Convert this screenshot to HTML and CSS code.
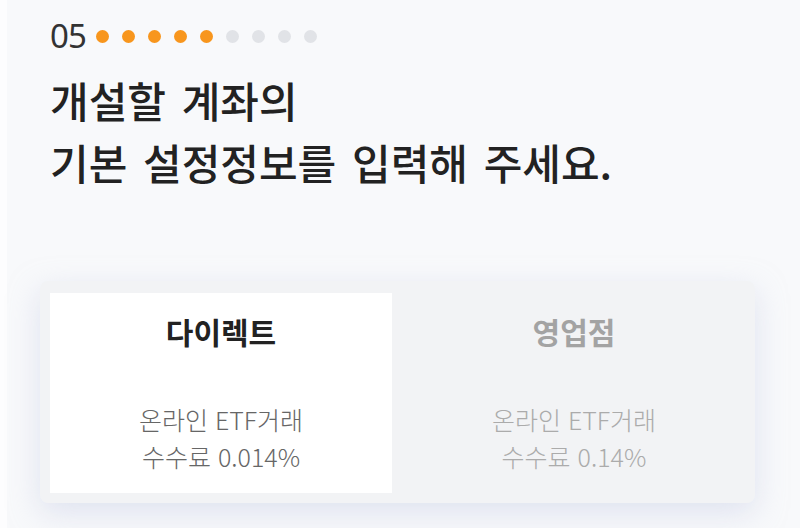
FILE: index.html
```html
<!DOCTYPE html>
<html lang="ko">
<head>
  <meta charset="UTF-8" />
  <meta name="viewport" content="width=device-width, initial-scale=1.0"/>
  <title>계좌개설 – 기본 설정정보</title>
  <link rel="stylesheet" href="styles.css">
</head>
<body>

  <div class="page">
    <div class="step">
      <span class="step-num">05</span>
      <div class="dots">
        <span class="dot on"></span>
        <span class="dot on"></span>
        <span class="dot on"></span>
        <span class="dot on"></span>
        <span class="dot on"></span>
        <span class="dot"></span>
        <span class="dot"></span>
        <span class="dot"></span>
        <span class="dot"></span>
      </div>
    </div>

    <h1 class="title">개설할 계좌의<br>기본 설정정보를 입력해 주세요.</h1>

    <!-- 계좌 유형 선택 -->
    <div class="type-card">
      <div class="type-tab active">
        <div class="tab-name">다이렉트</div>
        <div class="tab-desc">온라인 ETF거래<br>수수료 0.014%</div>
      </div>
      <div class="type-tab">
        <div class="tab-name">영업점</div>
        <div class="tab-desc">온라인 ETF거래<br>수수료 0.14%</div>
      </div>
    </div>
  </div>

</body>
</html>
```

FILE: styles.css
```css
* { box-sizing: border-box; margin: 0; padding: 0; }
body {
  font-family: 'Noto Sans CJK KR', 'Noto Sans', sans-serif;
  background: #fdfdfe; color: #222;
}
.page {
  margin-left: 7px; min-height: 528px;
  padding: 18px 0 0 33px;
  background: #f8f9fb;
}
.step {
  display: flex; align-items: center; gap: 10px;
  padding-left: 10px; height: 36px;
}
.step-num {
  font-family: 'Noto Sans', sans-serif;
  font-size: 33px; line-height: 36px; font-weight: 400; color: #333;
  letter-spacing: -1px;
}
.dots { display: flex; gap: 13px; }
.dot {
  width: 13px; height: 13px; border-radius: 50%;
  background: #e1e3e7;
}
.dot.on { background: #f8961d; }

.title {
  margin-top: 15px; padding-left: 10px;
  font-size: 42px; line-height: 62px; font-weight: 500; color: #222;
  word-spacing: 4px;
}

.type-card {
  margin-top: 88px; width: 715px;
  display: grid; grid-template-columns: 1fr 1fr; gap: 11px;
  padding: 12px 10px 10px;
  background: #f2f3f5; border-radius: 8px;
  box-shadow: 0 10px 30px rgba(200,206,230,0.5);
}
.type-tab {
  height: 200px; padding-top: 20px;
  text-align: center;
}
.type-tab.active { background: #fff; }
.tab-name {
  font-size: 30px; line-height: 36px; font-weight: 700; color: #a3a3a3;
}
.tab-desc {
  margin-top: 52px;
  font-size: 25px; line-height: 37px; font-weight: 300; color: #ababab;
}
.type-tab.active .tab-name { color: #222; }
.type-tab.active .tab-desc { color: #666; }
```
